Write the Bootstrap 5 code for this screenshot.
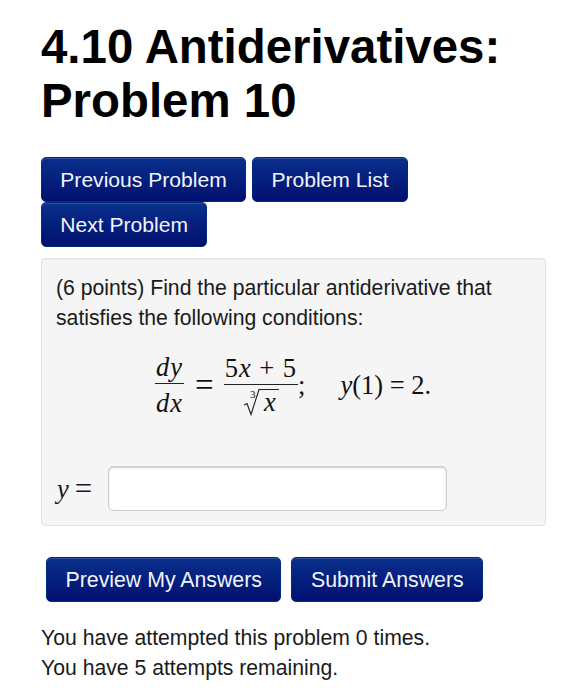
<!DOCTYPE html>
<html lang="en">
<head>
<meta charset="utf-8">
<title>4.10 Antiderivatives: Problem 10</title>
<link rel="stylesheet" href="https://cdn.jsdelivr.net/npm/bootstrap@5.3.0/dist/css/bootstrap.min.css">
<style>
body{font-family:"Liberation Sans",Arial,sans-serif;font-size:21.2px;line-height:30px;color:#1a1a1a;background:#fff;padding:0 28px 0 41px;overflow:hidden}
.page-title{font-family:"Liberation Sans",Arial,sans-serif;font-weight:700;font-size:47.4px;line-height:54px;color:#000;margin:20px 0 29px}
.nav-btns{line-height:0}
.wb-btn{display:inline-block;font-size:21.1px;line-height:24px;padding:9.5px 18.3px;color:#f2f4fb;border:1px solid #022a7c;border-radius:5px;background:linear-gradient(#0a2f8c,#00106f);box-shadow:inset 0 1px 0 rgba(255,255,255,.15)}
.wb-btn:hover{color:#fff;background:#00106f}
.btn-sep{display:inline-block;width:6px}
.prob-box{background:#f5f5f5;border:1px solid #e3e3e3;border-radius:4px;padding:14px;margin-top:11px;height:268px;box-shadow:inset 0 1px 1px rgba(0,0,0,.05)}
.prob-box p{margin:0}
.math-line{font-family:"Liberation Serif","Times New Roman",serif;font-size:26.5px;line-height:28px;color:#111;margin:19px 0 0 99px;height:66px}
.frac-part{display:inline-flex;flex-direction:column;align-items:center}
.frac-top{border-bottom:1.5px solid #222;padding:0 1px 2px;text-align:center;width:100%;letter-spacing:1px;white-space:nowrap}
.frac-bot{padding-top:5px;display:flex;justify-content:center;letter-spacing:1px}
.root-wrap{display:inline-flex;align-items:flex-start;position:relative;margin-top:-5px}
.root-idx{position:absolute;left:7px;top:4px;font-size:11px;line-height:11px}
.root-x{border-top:1.3px solid #222;line-height:25px;padding:0 2px 0 1px;margin-top:4px}
.eq-sign{font-size:33px;margin:0 10px 0 11px}
.semi{margin-right:35px}
.answer-row{margin-top:48px;font-family:"Liberation Serif","Times New Roman",serif;font-size:26.5px;height:45px}
.ans-lbl{width:52px;padding-left:1px}
.ans-eq{font-size:31px;margin-left:6px}
.ans-input{width:339px;height:45px;border:1px solid #ccc;border-radius:5px;background:#fff;box-shadow:inset 0 1px 2px rgba(0,0,0,.2)}
.ans-input:focus{outline:0}
.submit-row{margin:31px 0 21px 5px;gap:10px}
.submit-row .wb-btn{font-size:21.3px;padding-left:18.5px;padding-right:18.5px}
.status-text p{margin:0}
</style>
</head>
<body>
<h1 class="page-title">4.10 Antiderivatives: Problem 10</h1>
<div class="nav-btns">
<a href="#" class="wb-btn text-decoration-none">Previous Problem</a><span class="btn-sep"></span><a href="#" class="wb-btn text-decoration-none">Problem List</a>
<br>
<a href="#" class="wb-btn text-decoration-none">Next Problem</a>
</div>
<div class="prob-box">
<p>(6 points) Find the particular antiderivative that satisfies the following conditions:</p>
<div class="math-line d-flex align-items-center">
<span class="frac-part"><i class="frac-top">dy</i><i class="frac-bot">dx</i></span>
<span class="eq-sign">=</span>
<span class="frac-part"><span class="frac-top">5<i>x</i> + 5</span><span class="frac-bot"><span class="root-wrap"><svg width="20" height="32" viewBox="0 0 20 32"><path d="M1 20l3-1.5 4 11L16 4.5h4" fill="none" stroke="#222" stroke-width="1.2"/></svg><span class="root-idx">3</span><i class="root-x">x</i></span></span></span>
<span class="semi">;</span>
<span><i>y</i>(1) = 2.</span>
</div>
<div class="answer-row d-flex align-items-center">
<span class="ans-lbl d-flex align-items-center"><i>y</i><span class="ans-eq">=</span></span>
<input class="ans-input" type="text" aria-label="answer">
</div>
</div>
<div class="submit-row d-flex">
<a href="#" class="wb-btn text-decoration-none">Preview My Answers</a>
<a href="#" class="wb-btn text-decoration-none">Submit Answers</a>
</div>
<div class="status-text">
<p>You have attempted this problem 0 times.</p>
<p>You have 5 attempts remaining.</p>
</div>
<script src="https://cdn.jsdelivr.net/npm/bootstrap@5.3.0/dist/js/bootstrap.bundle.min.js"></script>
</body>
</html>
